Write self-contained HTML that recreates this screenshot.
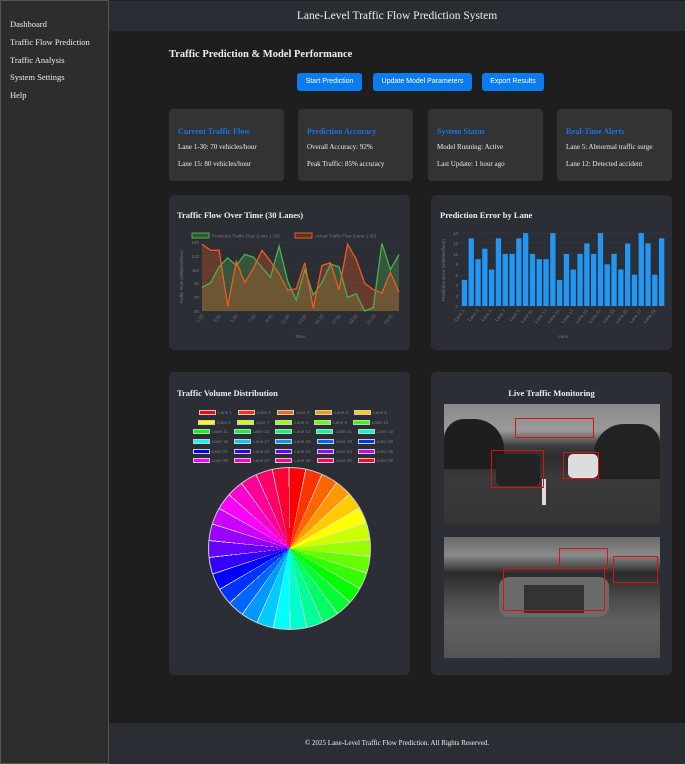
<!DOCTYPE html>
<html><head><meta charset="utf-8"><style>
*{margin:0;padding:0;box-sizing:border-box}
body{width:685px;height:764px;background:#1e1e1e;font-family:"Liberation Serif",serif;position:relative;overflow:hidden;color:#eee}
.a{position:absolute}
#side{left:0;top:0;width:109px;height:764px;background:#2d2d2d;border:1px solid #555}
#side div{position:absolute;left:9px;font-size:8.5px;color:#eee}
#hdr{left:109px;top:1px;width:576px;height:30px;background:#2a2d33;text-align:center;font-size:11.5px;line-height:30px}
#ftr{left:109px;top:723px;width:576px;height:41px;background:#2a2d33;text-align:center;font-size:7px;line-height:41px}
.btn{position:absolute;top:73px;height:18px;background:#0a7cf0;color:#fff;border-radius:3px;font-family:"Liberation Sans",sans-serif;font-size:7px;text-align:center;line-height:18px}
.card{position:absolute;top:109px;width:115px;height:72px;background:#333;border-radius:4px;padding:18px 9px}
.card h4{color:#1a73e8;font-size:8px;margin-bottom:7px}
.card p{font-size:7px;margin-bottom:9px}
.pan{position:absolute;background:#2b2e35;border-radius:5px}
.pan h3{position:absolute;font-size:8.5px;color:#eee}
.leg{position:absolute;left:182px;top:408px;width:222px;font-family:"Liberation Sans",sans-serif;font-size:4.5px;color:#777}
.row{display:flex;justify-content:center;height:9.6px;align-items:center}
.it{display:flex;align-items:center;margin:0 3px}
.it i{display:inline-block;width:17px;height:5px;border:1px solid #ccc;margin-right:2px}
.ph{position:absolute;left:444px;width:216px;height:121px;overflow:hidden}
.rb{position:absolute;border:1px solid #e01010}
</style></head><body>
<div id="side" class="a">
<div style="top:18px">Dashboard</div>
<div style="top:36px">Traffic Flow Prediction</div>
<div style="top:54px">Traffic Analysis</div>
<div style="top:71px">System Settings</div>
<div style="top:89px">Help</div>
</div>
<div id="hdr" class="a">Lane-Level Traffic Flow Prediction System</div>
<div class="a" style="left:169px;top:49px;font-size:10.5px;font-weight:bold">Traffic Prediction &amp; Model Performance</div>
<div class="btn" style="left:297px;width:65px">Start Prediction</div>
<div class="btn" style="left:373px;width:99px">Update Model Parameters</div>
<div class="btn" style="left:482px;width:62px">Export Results</div>

<div class="card" style="left:169px"><h4>Current Traffic Flow</h4><p>Lane 1-30: 70 vehicles/hour</p><p>Lane 15: 80 vehicles/hour</p></div>
<div class="card" style="left:298px"><h4>Prediction Accuracy</h4><p>Overall Accuracy: 92%</p><p>Peak Traffic: 85% accuracy</p></div>
<div class="card" style="left:428px"><h4>System Status</h4><p>Model Running: Active</p><p>Last Update: 1 hour ago</p></div>
<div class="card" style="left:557px"><h4>Real-Time Alerts</h4><p>Lane 5: Abnormal traffic surge</p><p>Lane 12: Detected accident</p></div>

<div class="pan" style="left:169px;top:195px;width:241px;height:155px"><h3 style="left:8px;top:15px">Traffic Flow Over Time (30 Lanes)</h3></div>
<div class="pan" style="left:431px;top:195px;width:241px;height:155px"><h3 style="left:9px;top:15px">Prediction Error by Lane</h3></div>
<div class="pan" style="left:169px;top:372px;width:241px;height:303px"><h3 style="left:8px;top:16px">Traffic Volume Distribution</h3></div>
<div class="pan" style="left:431px;top:372px;width:241px;height:303px"><h3 style="left:0;width:241px;text-align:center;top:16px">Live Traffic Monitoring</h3></div>

<svg class="a" style="left:0;top:0" width="685" height="764" font-family="Liberation Sans,sans-serif">
<g stroke="#3a3d44" stroke-width="0.5">
<line x1="202" y1="242" x2="399" y2="242"/><line x1="202" y1="256" x2="399" y2="256"/><line x1="202" y1="270" x2="399" y2="270"/><line x1="202" y1="283" x2="399" y2="283"/><line x1="202" y1="297" x2="399" y2="297"/><line x1="202" y1="311" x2="399" y2="311"/>
<line x1="461" y1="233" x2="665" y2="233"/><line x1="461" y1="243" x2="665" y2="243"/><line x1="461" y1="254" x2="665" y2="254"/><line x1="461" y1="264" x2="665" y2="264"/><line x1="461" y1="275" x2="665" y2="275"/><line x1="461" y1="285" x2="665" y2="285"/><line x1="461" y1="296" x2="665" y2="296"/><line x1="461" y1="306" x2="665" y2="306"/>
</g>
<g font-size="4.5" fill="#777">
<rect x="192" y="233" width="17" height="5" fill="#2e5a34" stroke="#4caf50"/><text x="212" y="237.5">Predicted Traffic Flow (Lane 1-30)</text>
<rect x="295" y="233" width="17" height="5" fill="#5a3020" stroke="#f05a22"/><text x="315" y="237.5">Actual Traffic Flow (Lane 1-30)</text>
<text x="199" y="244" text-anchor="end">150</text><text x="199" y="258" text-anchor="end">130</text><text x="199" y="272" text-anchor="end">110</text><text x="199" y="285" text-anchor="end">90</text><text x="199" y="299" text-anchor="end">70</text><text x="199" y="313" text-anchor="end">50</text>
<text x="300" y="338" text-anchor="middle">Time</text>
<text transform="translate(183,277) rotate(-90)" text-anchor="middle">Traffic Flow (vehicles/hour)</text>
<text x="458" y="235" text-anchor="end">14</text><text x="458" y="245" text-anchor="end">12</text><text x="458" y="256" text-anchor="end">10</text><text x="458" y="266" text-anchor="end">8</text><text x="458" y="277" text-anchor="end">6</text><text x="458" y="287" text-anchor="end">4</text><text x="458" y="298" text-anchor="end">2</text><text x="458" y="308" text-anchor="end">0</text>
<text x="563" y="338" text-anchor="middle">Lane</text>
<text transform="translate(445,270) rotate(-90)" text-anchor="middle">Prediction Error (vehicles/hour)</text>
</g>
<g font-size="4.5" fill="#777" text-anchor="end">
<text transform="translate(204,316) rotate(-50)">1:00</text><text transform="translate(221,316) rotate(-50)">3:00</text><text transform="translate(238,316) rotate(-50)">5:00</text><text transform="translate(256,316) rotate(-50)">7:00</text><text transform="translate(273,316) rotate(-50)">9:00</text><text transform="translate(290,316) rotate(-50)">11:00</text><text transform="translate(307,316) rotate(-50)">13:00</text><text transform="translate(324,316) rotate(-50)">15:00</text><text transform="translate(341,316) rotate(-50)">17:00</text><text transform="translate(358,316) rotate(-50)">19:00</text><text transform="translate(376,316) rotate(-50)">21:00</text><text transform="translate(393,316) rotate(-50)">23:00</text>
<text transform="translate(465,311) rotate(-50)">Lane 1</text><text transform="translate(479,311) rotate(-50)">Lane 3</text><text transform="translate(492,311) rotate(-50)">Lane 5</text><text transform="translate(506,311) rotate(-50)">Lane 7</text><text transform="translate(520,311) rotate(-50)">Lane 9</text><text transform="translate(533,311) rotate(-50)">Lane 11</text><text transform="translate(547,311) rotate(-50)">Lane 13</text><text transform="translate(560,311) rotate(-50)">Lane 15</text><text transform="translate(574,311) rotate(-50)">Lane 17</text><text transform="translate(588,311) rotate(-50)">Lane 19</text><text transform="translate(601,311) rotate(-50)">Lane 21</text><text transform="translate(615,311) rotate(-50)">Lane 23</text><text transform="translate(628,311) rotate(-50)">Lane 25</text><text transform="translate(642,311) rotate(-50)">Lane 27</text><text transform="translate(656,311) rotate(-50)">Lane 29</text>
</g>
<polygon fill="rgba(76,175,80,0.3)" points="202,311 202,287.5 210.6,282.7 219.1,266.8 227.7,257.9 236.3,265.5 244.8,254.4 253.4,257.2 262,267.5 270.5,277.2 279.1,246.1 287.7,281.3 296.2,300 304.8,269.6 313.3,295.1 321.9,282.7 330.5,264.1 339,266.8 347.6,297.2 356.2,293.8 364.7,311 373.3,307.6 381.9,243.4 390.4,269.6 399,254.4 399,311"/>
<polygon fill="rgba(240,90,34,0.3)" points="202,311 202,244.1 210.6,250.3 219.1,250.3 227.7,306.2 236.3,261.3 244.8,282.7 253.4,268.2 262,250.3 270.5,261.3 279.1,273.7 287.7,290.3 296.2,288.9 304.8,262.7 313.3,308.2 321.9,265.5 330.5,262.7 339,289.6 347.6,244.1 356.2,259.3 364.7,283.4 373.3,289.6 381.9,293.1 390.4,272.4 399,292.4 399,311"/>
<polyline fill="none" stroke="#4caf50" stroke-width="1.3" points="202,287.5 210.6,282.7 219.1,266.8 227.7,257.9 236.3,265.5 244.8,254.4 253.4,257.2 262,267.5 270.5,277.2 279.1,246.1 287.7,281.3 296.2,300 304.8,269.6 313.3,295.1 321.9,282.7 330.5,264.1 339,266.8 347.6,297.2 356.2,293.8 364.7,311 373.3,307.6 381.9,243.4 390.4,269.6 399,254.4"/>
<polyline fill="none" stroke="#f05a22" stroke-width="1.3" points="202,244.1 210.6,250.3 219.1,250.3 227.7,306.2 236.3,261.3 244.8,282.7 253.4,268.2 262,250.3 270.5,261.3 279.1,273.7 287.7,290.3 296.2,288.9 304.8,262.7 313.3,308.2 321.9,265.5 330.5,262.7 339,289.6 347.6,244.1 356.2,259.3 364.7,283.4 373.3,289.6 381.9,293.1 390.4,272.4 399,292.4"/>
<g fill="#2196f3">
<rect x="461.8" y="279.9" width="5.3" height="26.1"/><rect x="468.6" y="238.3" width="5.3" height="67.7"/><rect x="475.4" y="259.1" width="5.3" height="46.9"/><rect x="482.2" y="248.7" width="5.3" height="57.3"/><rect x="489" y="269.5" width="5.3" height="36.5"/>
<rect x="495.8" y="238.3" width="5.3" height="67.7"/><rect x="502.6" y="253.9" width="5.3" height="52.1"/><rect x="509.4" y="253.9" width="5.3" height="52.1"/><rect x="516.2" y="238.3" width="5.3" height="67.7"/><rect x="523" y="233.1" width="5.3" height="72.9"/>
<rect x="529.8" y="253.9" width="5.3" height="52.1"/><rect x="536.6" y="259.1" width="5.3" height="46.9"/><rect x="543.4" y="259.1" width="5.3" height="46.9"/><rect x="550.2" y="233.1" width="5.3" height="72.9"/><rect x="557" y="279.9" width="5.3" height="26.1"/>
<rect x="563.8" y="253.9" width="5.3" height="52.1"/><rect x="570.6" y="269.5" width="5.3" height="36.5"/><rect x="577.4" y="253.9" width="5.3" height="52.1"/><rect x="584.2" y="243.5" width="5.3" height="62.5"/><rect x="591" y="253.9" width="5.3" height="52.1"/>
<rect x="597.8" y="233.1" width="5.3" height="72.9"/><rect x="604.6" y="264.3" width="5.3" height="41.7"/><rect x="611.4" y="253.9" width="5.3" height="52.1"/><rect x="618.2" y="269.5" width="5.3" height="36.5"/><rect x="625" y="243.5" width="5.3" height="62.5"/>
<rect x="631.8" y="274.7" width="5.3" height="31.3"/><rect x="638.6" y="233.1" width="5.3" height="72.9"/><rect x="645.4" y="243.5" width="5.3" height="62.5"/><rect x="652.2" y="274.7" width="5.3" height="31.3"/><rect x="659" y="238.3" width="5.3" height="67.7"/>
</g>
</svg>

<div class="leg">
<div class="row"><span class="it"><i style="background:hsl(0,100%,50%)"></i>Lane 1</span><span class="it"><i style="background:hsl(12,100%,50%)"></i>Lane 2</span><span class="it"><i style="background:hsl(24,100%,50%)"></i>Lane 3</span><span class="it"><i style="background:hsl(36,100%,50%)"></i>Lane 4</span><span class="it"><i style="background:hsl(48,100%,50%)"></i>Lane 5</span></div>
<div class="row"><span class="it"><i style="background:hsl(60,100%,50%)"></i>Lane 6</span><span class="it"><i style="background:hsl(72,100%,50%)"></i>Lane 7</span><span class="it"><i style="background:hsl(84,100%,50%)"></i>Lane 8</span><span class="it"><i style="background:hsl(96,100%,50%)"></i>Lane 9</span><span class="it"><i style="background:hsl(108,100%,50%)"></i>Lane 10</span></div>
<div class="row"><span class="it"><i style="background:hsl(120,100%,50%)"></i>Lane 11</span><span class="it"><i style="background:hsl(132,100%,50%)"></i>Lane 12</span><span class="it"><i style="background:hsl(144,100%,50%)"></i>Lane 13</span><span class="it"><i style="background:hsl(156,100%,50%)"></i>Lane 14</span><span class="it"><i style="background:hsl(168,100%,50%)"></i>Lane 15</span></div>
<div class="row"><span class="it"><i style="background:hsl(180,100%,50%)"></i>Lane 16</span><span class="it"><i style="background:hsl(192,100%,50%)"></i>Lane 17</span><span class="it"><i style="background:hsl(204,100%,50%)"></i>Lane 18</span><span class="it"><i style="background:hsl(216,100%,50%)"></i>Lane 19</span><span class="it"><i style="background:hsl(228,100%,50%)"></i>Lane 20</span></div>
<div class="row"><span class="it"><i style="background:hsl(240,100%,50%)"></i>Lane 21</span><span class="it"><i style="background:hsl(252,100%,50%)"></i>Lane 22</span><span class="it"><i style="background:hsl(264,100%,50%)"></i>Lane 23</span><span class="it"><i style="background:hsl(276,100%,50%)"></i>Lane 24</span><span class="it"><i style="background:hsl(288,100%,50%)"></i>Lane 25</span></div>
<div class="row"><span class="it"><i style="background:hsl(300,100%,50%)"></i>Lane 26</span><span class="it"><i style="background:hsl(312,100%,50%)"></i>Lane 27</span><span class="it"><i style="background:hsl(324,100%,50%)"></i>Lane 28</span><span class="it"><i style="background:hsl(336,100%,50%)"></i>Lane 29</span><span class="it"><i style="background:hsl(348,100%,50%)"></i>Lane 30</span></div>
</div>

<div class="a" style="left:208px;top:467px;width:163px;height:163px;border-radius:50%;border:1px solid #ccc;background:conic-gradient(
hsl(0,100%,50%) 0 11.3deg,#ddd 0 12deg,hsl(12,100%,50%) 0 23.3deg,#ddd 0 24deg,hsl(24,100%,50%) 0 35.3deg,#ddd 0 36deg,hsl(36,100%,50%) 0 47.3deg,#ddd 0 48deg,hsl(48,100%,50%) 0 59.3deg,#ddd 0 60deg,
hsl(60,100%,50%) 0 71.3deg,#ddd 0 72deg,hsl(72,100%,50%) 0 83.3deg,#ddd 0 84deg,hsl(84,100%,50%) 0 95.3deg,#ddd 0 96deg,hsl(96,100%,50%) 0 107.3deg,#ddd 0 108deg,hsl(108,100%,50%) 0 119.3deg,#ddd 0 120deg,
hsl(120,100%,50%) 0 131.3deg,#ddd 0 132deg,hsl(132,100%,50%) 0 143.3deg,#ddd 0 144deg,hsl(144,100%,50%) 0 155.3deg,#ddd 0 156deg,hsl(156,100%,50%) 0 167.3deg,#ddd 0 168deg,hsl(168,100%,50%) 0 179.3deg,#ddd 0 180deg,
hsl(180,100%,50%) 0 191.3deg,#ddd 0 192deg,hsl(192,100%,50%) 0 203.3deg,#ddd 0 204deg,hsl(204,100%,50%) 0 215.3deg,#ddd 0 216deg,hsl(216,100%,50%) 0 227.3deg,#ddd 0 228deg,hsl(228,100%,50%) 0 239.3deg,#ddd 0 240deg,
hsl(240,100%,50%) 0 251.3deg,#ddd 0 252deg,hsl(252,100%,50%) 0 263.3deg,#ddd 0 264deg,hsl(264,100%,50%) 0 275.3deg,#ddd 0 276deg,hsl(276,100%,50%) 0 287.3deg,#ddd 0 288deg,hsl(288,100%,50%) 0 299.3deg,#ddd 0 300deg,
hsl(300,100%,50%) 0 311.3deg,#ddd 0 312deg,hsl(312,100%,50%) 0 323.3deg,#ddd 0 324deg,hsl(324,100%,50%) 0 335.3deg,#ddd 0 336deg,hsl(336,100%,50%) 0 347.3deg,#ddd 0 348deg,hsl(348,100%,50%) 0 359.3deg,#ddd 0 360deg)"></div>

<div class="ph" style="top:404px;background:linear-gradient(180deg,#8a8a8a 0%,#9a9a9a 22%,#3a3a3a 35%,#2c2c2c 45%,#3a3a3a 60%,#353535 100%)">
<div class="a" style="left:0;top:15px;width:60px;height:50px;background:#1e1e1e;border-radius:20px 30px 0 0"></div>
<div class="a" style="left:150px;top:20px;width:66px;height:55px;background:#222;border-radius:30px 20px 0 0"></div>
<div class="a" style="left:98px;top:75px;width:4px;height:26px;background:#ddd"></div>
<div class="a" style="left:52px;top:50px;width:44px;height:32px;background:#222;border-radius:6px"></div>
<div class="a" style="left:124px;top:50px;width:30px;height:24px;background:#ddd;border-radius:5px"></div>
</div>
<div class="rb" style="left:515px;top:418px;width:79px;height:20px"></div>
<div class="rb" style="left:491px;top:450px;width:53px;height:38px"></div>
<div class="rb" style="left:563px;top:452px;width:36px;height:27px"></div>

<div class="ph" style="top:537px;background:linear-gradient(180deg,#6a6a6a 0%,#8a8a8a 15%,#2a2a2a 30%,#4a4a4a 50%,#606060 70%,#555 100%)">
<div class="a" style="left:55px;top:40px;width:110px;height:40px;background:#6a6a6a;border-radius:10px"></div>
<div class="a" style="left:80px;top:48px;width:60px;height:28px;background:#333"></div>
</div>
<div class="rb" style="left:559px;top:548px;width:49px;height:21px"></div>
<div class="rb" style="left:613px;top:556px;width:45px;height:27px"></div>
<div class="rb" style="left:503px;top:568px;width:102px;height:43px"></div>

<div id="ftr" class="a">© 2025 Lane-Level Traffic Flow Prediction. All Rights Reserved.</div>
</body></html>
